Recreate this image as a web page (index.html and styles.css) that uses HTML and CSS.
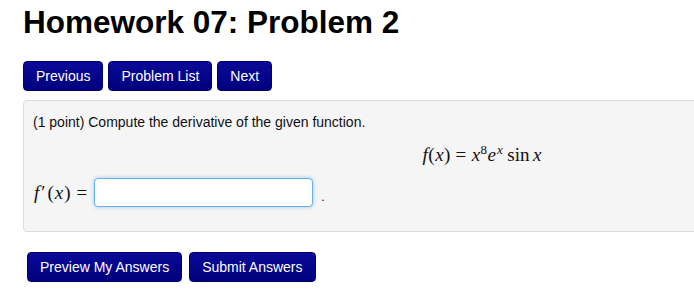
FILE: index.html
```html
<!DOCTYPE html>
<html lang="en">

<head>
    <meta charset="UTF-8">
    <title>Homework 07: Problem 2</title>
    <link rel="stylesheet" href="styles.css">
</head>

<body>
    <div id="page">
        <h1 class="title">Homework 07: Problem 2</h1>

        <div class="nav">
            <button class="btn">Previous</button>
            <button class="btn">Problem List</button>
            <button class="btn">Next</button>
        </div>

        <div class="problem">
            <p class="statement">(1 point) Compute the derivative of the given function.</p>
            <div class="display-math">
                <span class="mi">f</span>(<span class="mi">x</span>)<span class="mo">=</span><span class="mi">x</span><sup>8</sup><span class="mi">e</span><sup class="mi">x</sup><span class="fn">sin</span><span class="mi">x</span>
            </div>
            <div class="answer-row">
                <span class="math"><span class="mi">f</span><span class="prime">&prime;</span>(<span class="mi">x</span>)<span class="mo">=</span></span>
                <input type="text" class="answer" autofocus>
                <span class="dot">.</span>
            </div>
        </div>

        <div class="submit">
            <button class="btn">Preview My Answers</button>
            <button class="btn">Submit Answers</button>
        </div>
    </div>
</body>

</html>
```

FILE: styles.css
```css
html,
body {
    margin: 0;
    padding: 0;
    overflow: hidden;
}

body {
    width: 694px;
    height: 298px;
    font-family: "Liberation Sans", Arial, sans-serif;
    color: #000;
}

#page {
    padding-left: 23px;
}

.title {
    margin: 4px 0 0 0;
    font-size: 31.5px;
    font-weight: bold;
    line-height: 36px;
}

.nav {
    display: flex;
    gap: 5px;
    margin-top: 21px;
}

.btn {
    font-family: "Liberation Sans", Arial, sans-serif;
    font-size: 14px;
    line-height: 20px;
    padding: 4px 12px;
    color: #fff;
    background: linear-gradient(to bottom, #0a0a98, #00007e);
    border: 1px solid #000066;
    border-radius: 4px;
    cursor: pointer;
}

.problem {
    width: 918px;
    box-sizing: border-box;
    margin-top: 9px;
    height: 132px;
    padding: 10px 9px;
    background-color: #f5f5f5;
    border: 1px solid #dcdcdc;
    border-radius: 4px;
}

.statement {
    margin: 2px 0 0 0;
    font-size: 14px;
    line-height: 18px;
    color: #111;
}

.display-math {
    text-align: center;
    margin-top: 8px;
    padding-left: 0;
    font-family: "Liberation Serif", "Times New Roman", serif;
    font-size: 19px;
    line-height: 22px;
    color: #111;
}

.mi {
    font-style: italic;
    padding: 0 1px;
}

.display-math .mi {
    padding: 0 0.5px;
}

.mo {
    margin: 0 5px;
}

.fn {
    margin: 0 3px 0 4px;
}

.display-math sup {
    font-size: 13px;
}

.answer-row {
    display: flex;
    align-items: center;
    margin-top: 12px;
}

.math {
    font-family: "Liberation Serif", "Times New Roman", serif;
    font-size: 19px;
    color: #111;
    margin-right: 5px;
}

.prime {
    margin: 0 2px 0 1px;
}

.math .mo {
    margin: 0 2px 0 6px;
}

.answer {
    width: 219px;
    height: 29px;
    box-sizing: border-box;
    border: 1px solid #66afe9;
    border-radius: 4px;
    box-shadow: 0 0 4px rgba(102, 175, 233, 0.6);
    outline: none;
    padding: 4px 8px;
    font-size: 14px;
}

.dot {
    margin-left: 8px;
    font-size: 12px;
    position: relative;
    top: 4px;
}

.submit {
    display: flex;
    gap: 7px;
    margin-top: 20px;
    padding-left: 4px;
}
```
